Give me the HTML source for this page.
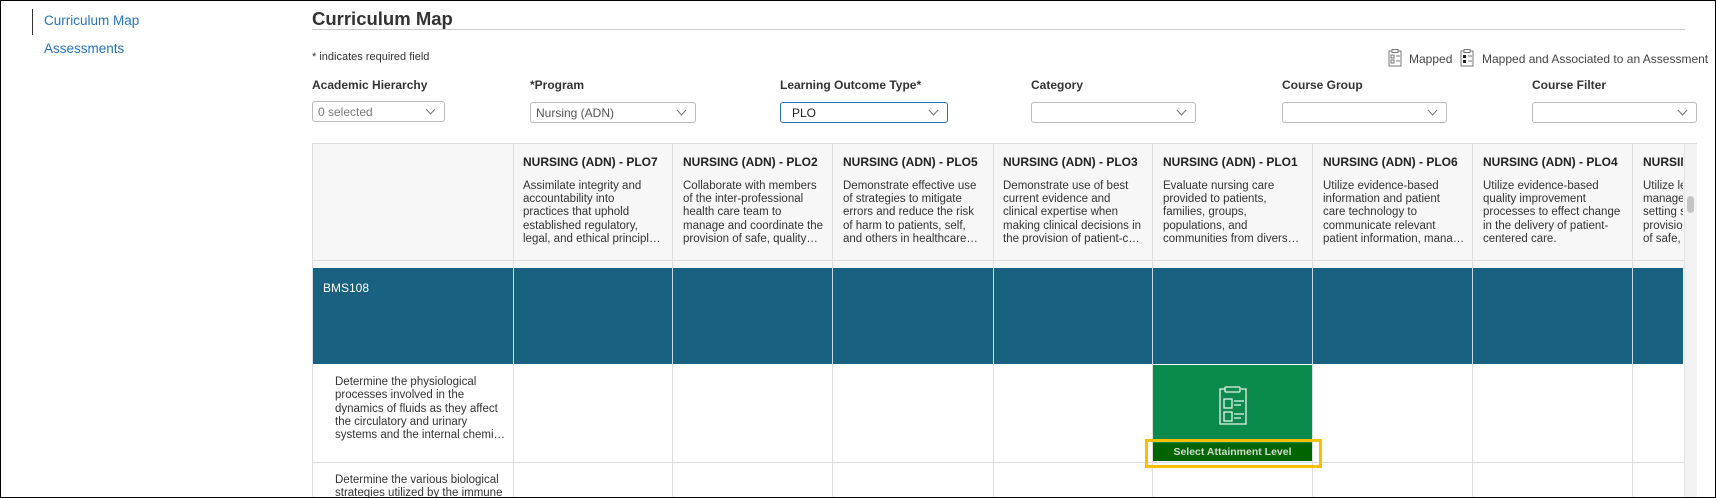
<!DOCTYPE html>
<html><head><meta charset="utf-8"><style>
*{box-sizing:border-box;margin:0;padding:0}
body{width:1716px;height:498px;overflow:hidden;background:#fff;font-family:"Liberation Sans",Arial,sans-serif;color:#333;position:relative}
.frame{position:absolute;left:0;top:0;width:1716px;height:498px;border:1px solid #000;pointer-events:none;z-index:10}
.a{position:absolute;white-space:nowrap}
.lnk{color:#2a73b5;font-size:13.5px}
.lbl{font-size:12px;font-weight:bold;color:#333}
.sel{position:absolute;top:102px;height:21px;border:1px solid #bbb;border-radius:3px;background:#fff;font-size:12px;color:#555;padding:3px 0 0 5px}
.sel svg{position:absolute;right:8px;top:6px}
.ds{font-size:11.5px;line-height:13.2px;position:absolute;top:37px;color:#333;white-space:nowrap}
.hd{font-size:12px;font-weight:bold;color:#222;position:absolute;top:12px}
.vl{position:absolute;width:1px;background:#ddd}
</style></head><body>
<div class="frame"></div>
<div class="a" style="left:32px;top:9px;width:1px;height:26px;background:#333"></div>
<div class="a lnk" style="left:44px;top:13px">Curriculum Map</div>
<div class="a lnk" style="left:44px;top:41px">Assessments</div>
<div class="a" style="left:312px;top:8px;font-size:18.5px;font-weight:bold;color:#333">Curriculum Map</div>
<div class="a" style="left:312px;top:29px;width:1373px;height:1px;background:#ccc"></div>
<div class="a" style="left:312px;top:51px;font-size:11px">* indicates required field</div>
<svg class="a" style="left:1388px;top:49px" width="14" height="18" viewBox="0 0 14 18"><rect x="1" y="2" width="12" height="15" fill="#fff" stroke="#777"/><rect x="4" y="0.5" width="6" height="3" fill="#fff" stroke="#777"/><rect x="3" y="6" width="3" height="3" fill="none" stroke="#777"/><rect x="3" y="11" width="3" height="3" fill="none" stroke="#777"/><path d="M8 7h4M8 12h4" stroke="#777"/></svg>
<div class="a" style="left:1409px;top:52px;font-size:12px;color:#444">Mapped</div>
<svg class="a" style="left:1460px;top:49px" width="14" height="18" viewBox="0 0 14 18"><rect x="1" y="2" width="12" height="15" fill="#fff" stroke="#777"/><rect x="4" y="0.5" width="6" height="3" fill="#fff" stroke="#777"/><rect x="3" y="6" width="3" height="3" fill="#222"/><rect x="3" y="11" width="3" height="3" fill="#222"/><path d="M8 7h4M8 12h4" stroke="#777"/></svg>
<div class="a" style="left:1482px;top:52px;font-size:12px;color:#444">Mapped and Associated to an Assessment</div>

<div class="a lbl" style="left:312px;top:78px">Academic Hierarchy</div>
<div class="a lbl" style="left:530px;top:78px">*Program</div>
<div class="a lbl" style="left:780px;top:78px">Learning Outcome Type*</div>
<div class="a lbl" style="left:1031px;top:78px">Category</div>
<div class="a lbl" style="left:1282px;top:78px">Course Group</div>
<div class="a lbl" style="left:1532px;top:78px">Course Filter</div>

<div class="sel" style="left:312px;width:133px;color:#777;top:101px">0 selected<svg width="11" height="7"><path d="M1 1l4.5 5 4.5-5" fill="none" stroke="#777"/></svg></div>
<div class="sel" style="left:530px;width:166px">Nursing (ADN)<svg width="11" height="7"><path d="M1 1l4.5 5 4.5-5" fill="none" stroke="#777"/></svg></div>
<div class="sel" style="left:780px;width:168px;border:1.5px solid #2a6fb0;color:#222;padding-left:11px">PLO<svg width="11" height="7"><path d="M1 1l4.5 5 4.5-5" fill="none" stroke="#777"/></svg></div>
<div class="sel" style="left:1031px;width:165px"><svg width="11" height="7"><path d="M1 1l4.5 5 4.5-5" fill="none" stroke="#777"/></svg></div>
<div class="sel" style="left:1282px;width:165px"><svg width="11" height="7"><path d="M1 1l4.5 5 4.5-5" fill="none" stroke="#777"/></svg></div>
<div class="sel" style="left:1532px;width:165px"><svg width="11" height="7"><path d="M1 1l4.5 5 4.5-5" fill="none" stroke="#777"/></svg></div>

<div class="a" style="left:312px;top:143px;width:1385px;height:355px;border-top:1px solid #ddd;border-left:1px solid #ddd;overflow:hidden">
  <div class="a" style="left:0;top:0;width:1371px;height:117px;background:#f7f7f7;border-bottom:1px solid #ddd"></div>
  <div class="a" style="left:0;top:117px;width:1371px;height:8px;background:#f7f7f7;border-bottom:1px solid #ddd"></div>
  <div class="a" style="left:0;top:318px;width:1371px;height:1px;background:#ddd"></div>
  <div class="a" style="left:22px;top:232px;font-size:11.5px;line-height:13.3px">Determine the physiological<br>processes involved in the<br>dynamics of fluids as they affect<br>the circulatory and urinary<br>systems and the internal chemi…</div>
  <div class="a" style="left:22px;top:330px;font-size:11.5px;line-height:13.3px">Determine the various biological<br>strategies utilized by the immune</div>
  <div class="a" style="left:1371px;top:0;width:14px;height:355px;background:#f3f3f3;border-left:1px solid #e3e3e3"></div>
  <div class="a" style="left:1374px;top:52px;width:7px;height:17px;background:#c4c4c4;border-radius:4px"></div>
</div>
<div class="vl" style="left:513px;top:143px;height:355px"></div>
<div class="vl" style="left:672px;top:143px;height:355px"></div>
<div class="vl" style="left:832px;top:143px;height:355px"></div>
<div class="vl" style="left:993px;top:143px;height:355px"></div>
<div class="vl" style="left:1152px;top:143px;height:355px"></div>
<div class="vl" style="left:1312px;top:143px;height:355px"></div>
<div class="vl" style="left:1472px;top:143px;height:355px"></div>
<div class="vl" style="left:1632px;top:143px;height:355px"></div>
<div class="a" style="left:313px;top:268px;width:1370px;height:96px;background:#186180"></div>
<div class="vl" style="left:513px;top:268px;height:96px;background:#cfd9df"></div>
<div class="vl" style="left:672px;top:268px;height:96px;background:#cfd9df"></div>
<div class="vl" style="left:832px;top:268px;height:96px;background:#cfd9df"></div>
<div class="vl" style="left:993px;top:268px;height:96px;background:#cfd9df"></div>
<div class="vl" style="left:1152px;top:268px;height:96px;background:#cfd9df"></div>
<div class="vl" style="left:1312px;top:268px;height:96px;background:#cfd9df"></div>
<div class="vl" style="left:1472px;top:268px;height:96px;background:#cfd9df"></div>
<div class="vl" style="left:1632px;top:268px;height:96px;background:#cfd9df"></div>
<div class="a" style="left:323px;top:281px;font-size:12px;color:#fff">BMS108</div>

<div class="a" style="left:513px;top:143px;width:1170px;height:120px;overflow:hidden">
<div class="hd" style="left:10px">NURSING (ADN) - PLO7</div>
<div class="ds" style="left:10px">Assimilate integrity and<br>accountability into<br>practices that uphold<br>established regulatory,<br>legal, and ethical principl…</div>
<div class="hd" style="left:170px">NURSING (ADN) - PLO2</div>
<div class="ds" style="left:170px">Collaborate with members<br>of the inter-professional<br>health care team to<br>manage and coordinate the<br>provision of safe, quality…</div>
<div class="hd" style="left:330px">NURSING (ADN) - PLO5</div>
<div class="ds" style="left:330px">Demonstrate effective use<br>of strategies to mitigate<br>errors and reduce the risk<br>of harm to patients, self,<br>and others in healthcare…</div>
<div class="hd" style="left:490px">NURSING (ADN) - PLO3</div>
<div class="ds" style="left:490px">Demonstrate use of best<br>current evidence and<br>clinical expertise when<br>making clinical decisions in<br>the provision of patient-c…</div>
<div class="hd" style="left:650px">NURSING (ADN) - PLO1</div>
<div class="ds" style="left:650px">Evaluate nursing care<br>provided to patients,<br>families, groups,<br>populations, and<br>communities from divers…</div>
<div class="hd" style="left:810px">NURSING (ADN) - PLO6</div>
<div class="ds" style="left:810px">Utilize evidence-based<br>information and patient<br>care technology to<br>communicate relevant<br>patient information, mana…</div>
<div class="hd" style="left:970px">NURSING (ADN) - PLO4</div>
<div class="ds" style="left:970px">Utilize evidence-based<br>quality improvement<br>processes to effect change<br>in the delivery of patient-<br>centered care.</div>
<div class="hd" style="left:1130px">NURSING (ADN) - PLO8</div>
<div class="ds" style="left:1130px">Utilize leadership and<br>management skills in<br>setting standards for the<br>provision of safe, quality<br>of safe, quality care</div>
</div>

<div class="a" style="left:1153px;top:365px;width:159px;height:96px;background:#0b8a4e"></div>
<svg class="a" style="left:1215px;top:386px" width="36" height="40" viewBox="0 0 36 40"><path d="M10 3H5v35h26V3h-5" fill="none" stroke="#e8f3ec" stroke-width="1.3"/><rect x="10" y="1" width="15" height="5" rx="1" fill="#0b8a4e" stroke="#e8f3ec" stroke-width="1.3"/><rect x="9" y="13" width="8" height="9" fill="none" stroke="#e8f3ec" stroke-width="1.3"/><rect x="9" y="26" width="8" height="9" fill="none" stroke="#e8f3ec" stroke-width="1.3"/><path d="M19 15h10M19 19h7M19 28h10M19 32h7" stroke="#e8f3ec" stroke-width="1.3"/></svg>
<div class="a" style="left:1153px;top:443px;width:159px;height:18px;background:#006400;color:#cfdccf;font-size:10.5px;font-weight:bold;text-align:center;line-height:18px">Select Attainment Level</div>
<div class="a" style="left:1145px;top:439px;width:177px;height:29px;border:3px solid #f9bf00"></div>
</body></html>
